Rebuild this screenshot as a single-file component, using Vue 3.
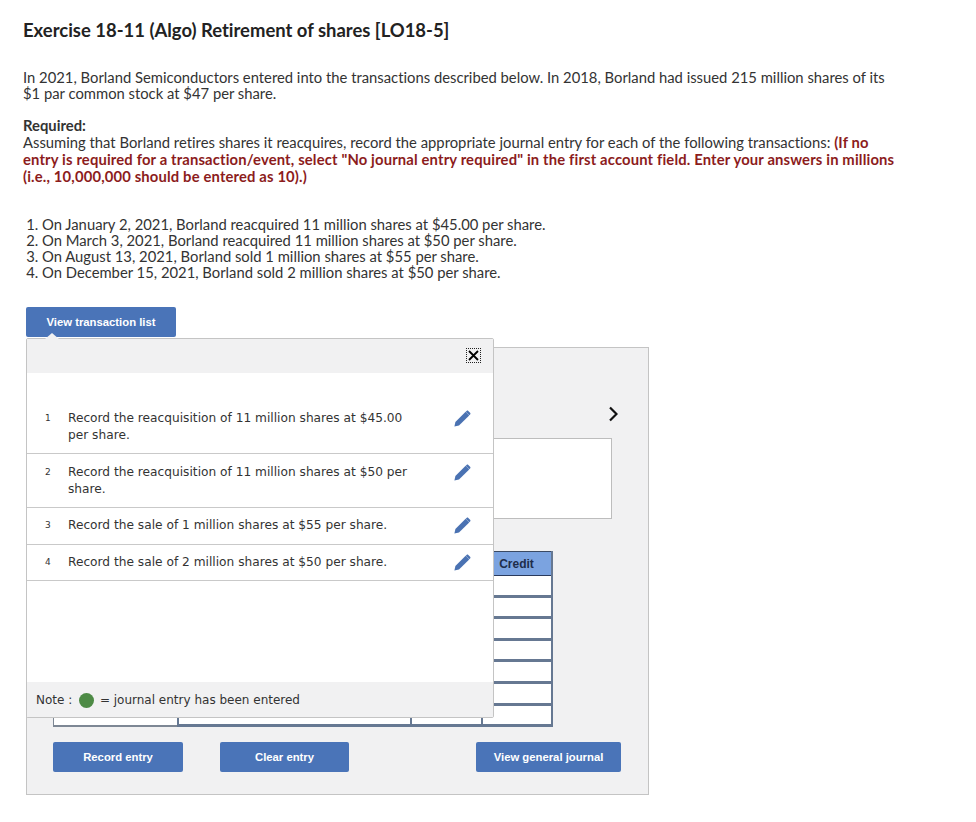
<script setup>
const problems = [
  'On January 2, 2021, Borland reacquired 11 million shares at $45.00 per share.',
  'On March 3, 2021, Borland reacquired 11 million shares at $50 per share.',
  'On August 13, 2021, Borland sold 1 million shares at $55 per share.',
  'On December 15, 2021, Borland sold 2 million shares at $50 per share.'
]
const transactions = [
  { id: 1, text: 'Record the reacquisition of 11 million shares at $45.00 per share.', cls: 'first' },
  { id: 2, text: 'Record the reacquisition of 11 million shares at $50 per share.', cls: 'tall' },
  { id: 3, text: 'Record the sale of 1 million shares at $55 per share.', cls: 'short' },
  { id: 4, text: 'Record the sale of 2 million shares at $50 per share.', cls: 'short' }
]
const rows = [1, 2, 3, 4, 5, 6, 7]
</script>

<template>
  <main class="page">
    <h1>Exercise 18-11 (Algo) Retirement of shares [LO18-5]</h1>
    <p class="intro">In 2021, Borland Semiconductors entered into the transactions described below. In 2018, Borland had issued 215 million shares of its $1 par common stock at $47 per share.</p>
    <div class="required">
      <strong>Required:</strong>
      <p>Assuming that Borland retires shares it reacquires, record the appropriate journal entry for each of the following transactions: <b>(If no entry is required for a transaction/event, select "No journal entry required" in the first account field. Enter your answers in millions (i.e., 10,000,000 should be entered as 10).)</b></p>
    </div>
    <ol class="steps">
      <li v-for="p in problems" :key="p">{{ p }}</li>
    </ol>

    <section class="work">
      <button class="btn view-list">View transaction list</button>

      <div class="panel">
        <div class="next-row">
          <svg class="chevron" width="10" height="16" viewBox="0 0 10 16"><path d="M2 1.5L8.5 8 2 14.5" fill="none" stroke="#111" stroke-width="2.2"/></svg>
        </div>
        <div class="desc-box"></div>
        <div class="journal">
          <div class="jrow head">
            <span></span><span></span><span></span><span class="credit">Credit</span>
          </div>
          <div v-for="r in rows" :key="r" class="jrow">
            <span></span><span></span><span></span><span></span>
          </div>
        </div>
        <div class="actions">
          <button class="btn record">Record entry</button>
          <button class="btn clear">Clear entry</button>
          <button class="btn general">View general journal</button>
        </div>
      </div>

      <div class="popup">
        <span class="arrow"></span>
        <div class="popup-head">
          <span class="close">
            <svg width="11" height="11" viewBox="0 0 11 11"><path d="M1 1l9 9M10 1l-9 9" stroke="#000" stroke-width="1.8"/></svg>
          </span>
        </div>
        <ul class="tx-list">
          <li v-for="t in transactions" :key="t.id" :class="t.cls">
            <span class="num">{{ t.id }}</span>
            <span class="tx-text">{{ t.text }}</span>
            <svg class="pencil" width="17" height="17" viewBox="0 0 17 17">
              <path d="M0.4 16.6l1-4.6L11.6 1.8l3.6 3.6L5 15.6z" fill="#4a72b2"/>
              <path d="M12.6 0.9c.5-.5 1.2-.5 1.7 0l1.8 1.8c.5.5.5 1.2 0 1.7l-.9.9-3.5-3.5z" fill="#4a72b2"/>
            </svg>
          </li>
        </ul>
        <div class="note">Note : <span class="dot"></span> = journal entry has been entered</div>
      </div>
    </section>
  </main>
</template>

<style>
html, body { margin: 0; background: #fff; }
</style>

<style scoped>
.page {
  width: 976px;
  height: 822px;
  box-sizing: border-box;
  padding: 20px 0 0 23px;
  font-family: "Lato", "Open Sans", sans-serif;
  font-variant-ligatures: none;
  color: #333;
  overflow: hidden;
}
h1 {
  margin: 0;
  font-size: 18.45px;
  line-height: 20px;
  font-weight: 700;
  color: #222;
}
.intro {
  margin: 29px 0 0;
  width: 880px;
  font-size: 14.8px;
  line-height: 16px;
}
.required { margin-top: 16px; width: 882px; font-size: 14.8px; line-height: 17px; }
.required strong { display: block; color: #333; }
.required p { margin: 0; }
.required b { color: #8c1c1c; letter-spacing: 0.15px; }
.steps {
  margin: 31px 0 0;
  padding: 0 0 0 19px;
  font-size: 14.8px;
  line-height: 16px;
}
.work {
  position: relative;
  width: 623px;
  margin: 27px 0 0 3px;
}
.btn {
  display: block;
  border: 0;
  border-radius: 2px;
  background: #4a74b8;
  color: #fff;
  font-family: "Liberation Sans", Arial, sans-serif;
  font-weight: 700;
  font-size: 11.3px;
  height: 30px;
  padding: 0;
}
.view-list { width: 150px; }
.panel {
  box-sizing: border-box;
  width: 623px;
  height: 448px;
  margin-top: 10px;
  padding: 0 26px;
  background: #f1f1f2;
  border: 1px solid #c4c4c4;
}
.next-row { display: flex; justify-content: flex-end; height: 90px; margin-right: 4px; align-items: flex-end; }
.chevron { margin: 0 0 16px 0; }
.desc-box {
  box-sizing: border-box;
  width: 559px;
  height: 81px;
  background: #fff;
  border: 1px solid #bdbdbd;
}
.journal { width: 500px; margin-top: 32px; border-right: 2px solid #667892; box-sizing: border-box; }
.jrow {
  display: grid;
  grid-template-columns: 124px 233px 71px 70px;
  height: 21.6px;
  box-sizing: border-box;
  background: #fff;
}
.jrow span { border-left: 2px solid #667892; border-bottom: 3px solid #667892; }
.jrow:last-child span:first-child { border-left: 1px solid #7d8794; border-bottom: 2px solid #7d8794; }
.jrow.head {
  height: 25px;
  background: #7ba3e0;
  border-top: 1px solid #3a4a64;
  border-bottom: 1px solid #2a3a5c;
  font-family: "Liberation Sans", Arial, sans-serif;
  font-size: 12px;
  font-weight: 700;
  color: #1e2d4a;
  line-height: 24px;
  text-align: center;
}
.jrow.head span { border-bottom: 0; }
.jrow.head .credit { border-left: 1px solid #3a4a64; }
.actions { display: flex; margin-top: 15px; }
.record { width: 130px; }
.clear { width: 129px; margin-left: 37px; }
.general { width: 145px; margin-left: 127px; }

.popup {
  position: absolute;
  left: 0;
  top: 31px;
  box-sizing: border-box;
  width: 468px;
  height: 380px;
  background: #fff;
  border: 1px solid #c4c4c4;
  border-radius: 2px;
  font-family: "DejaVu Sans", Verdana, sans-serif;
  color: #333;
  display: flex;
  flex-direction: column;
}
.arrow {
  position: absolute;
  left: 18px;
  top: -6px;
  width: 0;
  height: 0;
  border-left: 7px solid transparent;
  border-right: 7px solid transparent;
  border-bottom: 6px solid #f1f1f2;
}
.popup-head { height: 34px; background: #f1f1f2; position: relative; flex: none; }
.close {
  position: absolute;
  left: 439px;
  top: 9px;
  width: 13px;
  height: 13px;
  border: 1px dotted #222;
  display: flex;
  align-items: center;
  justify-content: center;
}
.tx-list { list-style: none; margin: 0; padding: 0; flex: 1; }
.tx-list li {
  display: grid;
  grid-template-columns: 41px 345px 1fr;
  border-bottom: 1px solid #c9c9c9;
  font-size: 12.2px;
  line-height: 17px;
  box-sizing: border-box;
  align-items: start;
}
.tx-list li.first { height: 81px; padding-top: 37px; }
.tx-list li.tall { height: 54px; padding-top: 10px; }
.tx-list li.short { height: 36.5px; padding-top: 9px; }
.num { font-size: 9px; padding-left: 18px; }
.pencil { margin: 0 0 0 41px; }
.note {
  height: 35px;
  flex: none;
  box-sizing: border-box;
  background: #f1f1f2;
  font-size: 12px;
  line-height: 33px;
  padding: 1px 0 0 9px;
  display: flex;
  align-items: center;
  white-space: pre;
}
.dot {
  display: inline-block;
  width: 15px;
  height: 15px;
  border-radius: 50%;
  background: #4d8a45;
  margin: 0 2px 0 3px;
}
</style>
